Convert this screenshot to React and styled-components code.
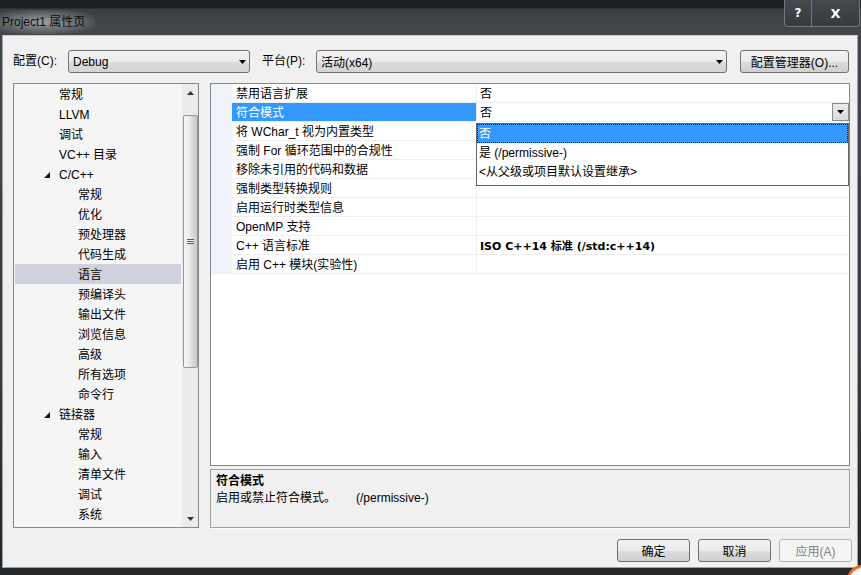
import React from 'react';
import styled, { createGlobalStyle } from 'styled-components';

const GlobalStyle = createGlobalStyle`
  html, body { margin: 0; padding: 0; width: 861px; height: 575px; overflow: hidden; background: #222; }
  body { font-family: "Liberation Sans", "Noto Sans CJK SC", sans-serif; font-size: 12px; color: #000; }
  * { box-sizing: border-box; }
`;

const Window = styled.div`
  position: relative;
  width: 861px;
  height: 575px;
  display: flex;
  flex-direction: column;
  overflow: hidden;
  background: linear-gradient(to bottom, #1d1e1f 0, #1d1e1f 8px, #3b3f43 9px, #43474b 34px, #3a3d41 60%, #24272a 100%);
`;

const TitleBar = styled.div`
  height: 35px;
  flex-shrink: 0;
  display: flex;
  justify-content: space-between;
  align-items: flex-start;
`;

const TitleText = styled.div`
  margin-top: 10px;
  padding: 5px 10px 5px 2px;
  font-size: 12px;
  line-height: 14px;
  color: #0c0c0c;
  background: radial-gradient(ellipse at 45% 50%, rgba(178, 183, 188, 0.8) 0%, rgba(125, 130, 136, 0.5) 55%, rgba(70, 75, 80, 0) 82%);
`;

const CaptionGroup = styled.div`
  display: flex;
  margin-right: 1px;
`;

const CaptionButton = styled.div`
  width: ${p => p.$w}px;
  height: 27px;
  margin-left: ${p => (p.$joined ? '-1px' : '0')};
  border: 1px solid #74787c;
  border-top: none;
  border-radius: ${p => p.$radius};
  background: linear-gradient(to bottom, #45494d, #363a3e);
  color: #fff;
  font-family: "DejaVu Sans", sans-serif;
  font-weight: bold;
  font-size: ${p => p.$fs}px;
  display: flex;
  align-items: center;
  justify-content: center;
`;

const Client = styled.div`
  flex: 1;
  margin: 0 3px 7px 2px;
  background: #f0f0f0;
  border: 1px solid #9da1a5;
  border-top-color: #c9ccd0;
  padding: 14px 0 0 10px;
  display: flex;
  flex-direction: column;
`;

const TopRow = styled.div`
  display: flex;
  align-items: center;
  height: 23px;
`;

const FieldLabel = styled.div`
  width: ${p => p.$w}px;
  margin-left: ${p => p.$ml || 0}px;
  line-height: 23px;
  white-space: nowrap;
`;

const Combo = styled.div`
  width: ${p => p.$w}px;
  height: 23px;
  border: 1px solid #707070;
  border-radius: 3px;
  background: linear-gradient(to bottom, #f2f2f2 0%, #ebebeb 50%, #dddddd 51%, #d4d4d4 100%);
  display: flex;
  align-items: center;
  justify-content: space-between;
  padding: 0 3px 0 4px;
`;

const PushButton = styled.div`
  width: ${p => p.$w}px;
  height: 23px;
  margin-left: ${p => p.$ml || 0}px;
  border: 1px solid ${p => (p.$disabled ? '#adb2b5' : '#707070')};
  border-radius: 3px;
  background: ${p =>
    p.$disabled
      ? '#f4f4f4'
      : 'linear-gradient(to bottom, #f2f2f2 0%, #ebebeb 50%, #dddddd 51%, #cfcfcf 100%)'};
  color: ${p => (p.$disabled ? '#838383' : '#000')};
  display: flex;
  align-items: center;
  justify-content: center;
  white-space: nowrap;
`;

const MainRow = styled.div`
  display: flex;
  gap: 11px;
  margin-top: 10px;
  height: 445px;
`;

const TreePanel = styled.div`
  width: 186px;
  border: 1px solid #828790;
  background: #f5f5f5;
  display: flex;
`;

const TreeList = styled.div`
  flex: 1;
  display: flex;
  flex-direction: column;
  overflow: hidden;
`;

const TreeRow = styled.div`
  height: 20px;
  flex-shrink: 0;
  margin-left: 1px;
  display: flex;
  align-items: center;
  padding-top: 2px;
  padding-left: ${p => p.$indent}px;
  background: ${p => (p.$selected ? '#cfd2dd' : 'transparent')};
  white-space: nowrap;
  line-height: 18px;
`;

const Expander = styled.svg`
  width: 6px;
  height: 6px;
  margin-right: 9px;
  flex-shrink: 0;
`;

const ScrollBar = styled.div`
  width: 17px;
  display: flex;
  flex-direction: column;
  background: #ebebeb;
  border-left: 1px solid #f4f4f4;
`;

const ScrollArrow = styled.div`
  height: 17px;
  flex-shrink: 0;
  display: flex;
  align-items: center;
  justify-content: center;
`;

const ScrollTrack = styled.div`
  flex: 1;
  padding-top: 14px;
  display: flex;
  flex-direction: column;
  align-items: center;
`;

const Thumb = styled.div`
  width: 15px;
  height: 253px;
  border: 1px solid #979797;
  border-radius: 2px;
  background: linear-gradient(to right, #f6f6f6 0%, #ececec 40%, #dcdcdc 60%, #c8c8c8 100%);
  display: flex;
  align-items: center;
  justify-content: center;
`;

const Grip = styled.div`
  width: 7px;
  height: 5px;
  background: repeating-linear-gradient(to bottom, #5a5a5a 0 1px, #f4f4f4 1px 2px);
`;

const RightColumn = styled.div`
  width: 640px;
  display: flex;
  flex-direction: column;
  gap: 3px;
`;

const PropGrid = styled.div`
  position: relative;
  height: 383px;
  border: 1px solid #828790;
  background: #fff;
  display: flex;
  flex-direction: column;
`;

const PropRow = styled.div`
  display: flex;
  height: 19px;
  flex-shrink: 0;
`;

const Gutter = styled.div`
  width: 21px;
  background: #eff3f9;
`;

const NameCell = styled.div`
  width: 245px;
  padding-left: 4px;
  line-height: 21px;
  border-bottom: 1px solid #eceef2;
  border-right: 1px solid #eceef2;
  background: ${p => (p.$selected ? '#3399ff' : 'transparent')};
  color: ${p => (p.$selected ? '#fff' : '#000')};
  white-space: nowrap;
`;

const ValueCell = styled.div`
  flex: 1;
  padding-left: 3px;
  line-height: 21px;
  border-bottom: 1px solid #eceef2;
  font-family: ${p => (p.$bold ? '"DejaVu Sans", "Noto Sans CJK SC", sans-serif' : 'inherit')};
  font-weight: ${p => (p.$bold ? 'bold' : 'normal')};
  font-size: ${p => (p.$bold ? '11px' : '12px')};
  display: flex;
  align-items: flex-start;
  justify-content: space-between;
  white-space: nowrap;
`;

const DropButton = styled.div`
  width: 17px;
  height: 18px;
  border: 1px solid #8c8c8c;
  background: linear-gradient(to bottom, #ececec, #d9d9d9);
  display: flex;
  align-items: center;
  justify-content: center;
`;

const DropList = styled.div`
  position: absolute;
  left: 265px;
  top: 39px;
  width: 373px;
  height: 63px;
  border: 1px solid #646464;
  background: #fff;
  display: flex;
  flex-direction: column;
`;

const DropItem = styled.div`
  height: 19px;
  padding-left: 2px;
  padding-top: 1px;
  line-height: 19px;
  background: ${p => (p.$selected ? '#3399ff' : 'transparent')};
  color: ${p => (p.$selected ? '#fff' : '#000')};
  outline: ${p => (p.$selected ? '1px dotted #1a1a1a' : 'none')};
  outline-offset: -1px;
  white-space: nowrap;
`;

const DescPanel = styled.div`
  height: 59px;
  border: 1px solid #a0a0a0;
  box-shadow: 0 1px 0 #ffffff;
  padding: 3px 5px;
  line-height: 17px;
`;

const DescTitle = styled.div`
  font-weight: bold;
`;

const DescFlag = styled.span`
  margin-left: 20px;
`;

const ButtonRow = styled.div`
  display: flex;
  justify-content: flex-end;
  gap: 8px;
  margin-top: 11px;
  padding-right: 5px;
`;

const Corner = styled.div`
  position: absolute;
  left: 847px;
  top: 565px;
  width: 30px;
  height: 30px;
  border-radius: 50%;
  border: 3px solid #f06a2c;
  background: #fff;
`;

const DownTri = ({ w = 7, h = 4, color = '#000' }) => (
  <svg width={w} height={h} viewBox={`0 0 ${w} ${h}`}>
    <polygon points={`0,0 ${w},0 ${w / 2},${h}`} fill={color} />
  </svg>
);

const UpTri = ({ w = 7, h = 4, color = '#000' }) => (
  <svg width={w} height={h} viewBox={`0 0 ${w} ${h}`}>
    <polygon points={`0,${h} ${w},${h} ${w / 2},0`} fill={color} />
  </svg>
);

const treeItems = [
  { label: '常规', level: 1 },
  { label: 'LLVM', level: 1 },
  { label: '调试', level: 1 },
  { label: 'VC++ 目录', level: 1 },
  { label: 'C/C++', level: 1, expanded: true },
  { label: '常规', level: 2 },
  { label: '优化', level: 2 },
  { label: '预处理器', level: 2 },
  { label: '代码生成', level: 2 },
  { label: '语言', level: 2, selected: true },
  { label: '预编译头', level: 2 },
  { label: '输出文件', level: 2 },
  { label: '浏览信息', level: 2 },
  { label: '高级', level: 2 },
  { label: '所有选项', level: 2 },
  { label: '命令行', level: 2 },
  { label: '链接器', level: 1, expanded: true },
  { label: '常规', level: 2 },
  { label: '输入', level: 2 },
  { label: '清单文件', level: 2 },
  { label: '调试', level: 2 },
  { label: '系统', level: 2 },
];

const props = [
  { name: '禁用语言扩展', value: '否' },
  { name: '符合模式', value: '否', selected: true },
  { name: '将 WChar_t 视为内置类型', value: '' },
  { name: '强制 For 循环范围中的合规性', value: '' },
  { name: '移除未引用的代码和数据', value: '' },
  { name: '强制类型转换规则', value: '' },
  { name: '启用运行时类型信息', value: '' },
  { name: 'OpenMP 支持', value: '' },
  { name: 'C++ 语言标准', value: 'ISO C++14 标准 (/std:c++14)', bold: true },
  { name: '启用 C++ 模块(实验性)', value: '' },
];

const options = [
  { label: '否', selected: true },
  { label: '是 (/permissive-)' },
  { label: '<从父级或项目默认设置继承>' },
];

export default function App() {
  return (
    <>
      <GlobalStyle />
      <Window>
        <TitleBar>
          <TitleText>Project1 属性页</TitleText>
          <CaptionGroup>
            <CaptionButton $w={28} $fs={12} $radius="0 0 0 4px">?</CaptionButton>
            <CaptionButton $w={49} $fs={13} $joined $radius="0 0 4px 0">X</CaptionButton>
          </CaptionGroup>
        </TitleBar>
        <Client>
          <TopRow>
            <FieldLabel $w={55}>配置(C):</FieldLabel>
            <Combo $w={182}>
              <span>Debug</span>
              <DownTri />
            </Combo>
            <FieldLabel $w={54} $ml={12}>平台(P):</FieldLabel>
            <Combo $w={411}>
              <span>活动(x64)</span>
              <DownTri />
            </Combo>
            <PushButton $w={109} $ml={13}>配置管理器(O)...</PushButton>
          </TopRow>
          <MainRow>
            <TreePanel>
              <TreeList>
                {treeItems.map((it, i) => (
                  <TreeRow
                    key={i}
                    $indent={it.level === 1 ? (it.expanded ? 29 : 44) : 63}
                    $selected={it.selected}
                  >
                    {it.expanded && (
                      <Expander viewBox="0 0 6 6">
                        <polygon points="6,0 6,6 0,6" fill="#1a1a1a" />
                      </Expander>
                    )}
                    {it.label}
                  </TreeRow>
                ))}
              </TreeList>
              <ScrollBar>
                <ScrollArrow>
                  <UpTri color="#333" />
                </ScrollArrow>
                <ScrollTrack>
                  <Thumb>
                    <Grip />
                  </Thumb>
                </ScrollTrack>
                <ScrollArrow>
                  <DownTri color="#333" />
                </ScrollArrow>
              </ScrollBar>
            </TreePanel>
            <RightColumn>
              <PropGrid>
                {props.map((p, i) => (
                  <PropRow key={i}>
                    <Gutter />
                    <NameCell $selected={p.selected}>{p.name}</NameCell>
                    <ValueCell $bold={p.bold}>
                      <span>{p.value}</span>
                      {p.selected && (
                        <DropButton>
                          <DownTri />
                        </DropButton>
                      )}
                    </ValueCell>
                  </PropRow>
                ))}
                <DropList>
                  {options.map((o, i) => (
                    <DropItem key={i} $selected={o.selected}>
                      {o.label}
                    </DropItem>
                  ))}
                </DropList>
              </PropGrid>
              <DescPanel>
                <DescTitle>符合模式</DescTitle>
                <div>
                  启用或禁止符合模式。<DescFlag>(/permissive-)</DescFlag>
                </div>
              </DescPanel>
            </RightColumn>
          </MainRow>
          <ButtonRow>
            <PushButton $w={73}>确定</PushButton>
            <PushButton $w={73}>取消</PushButton>
            <PushButton $w={73} $disabled>应用(A)</PushButton>
          </ButtonRow>
        </Client>
        <Corner />
      </Window>
    </>
  );
}
